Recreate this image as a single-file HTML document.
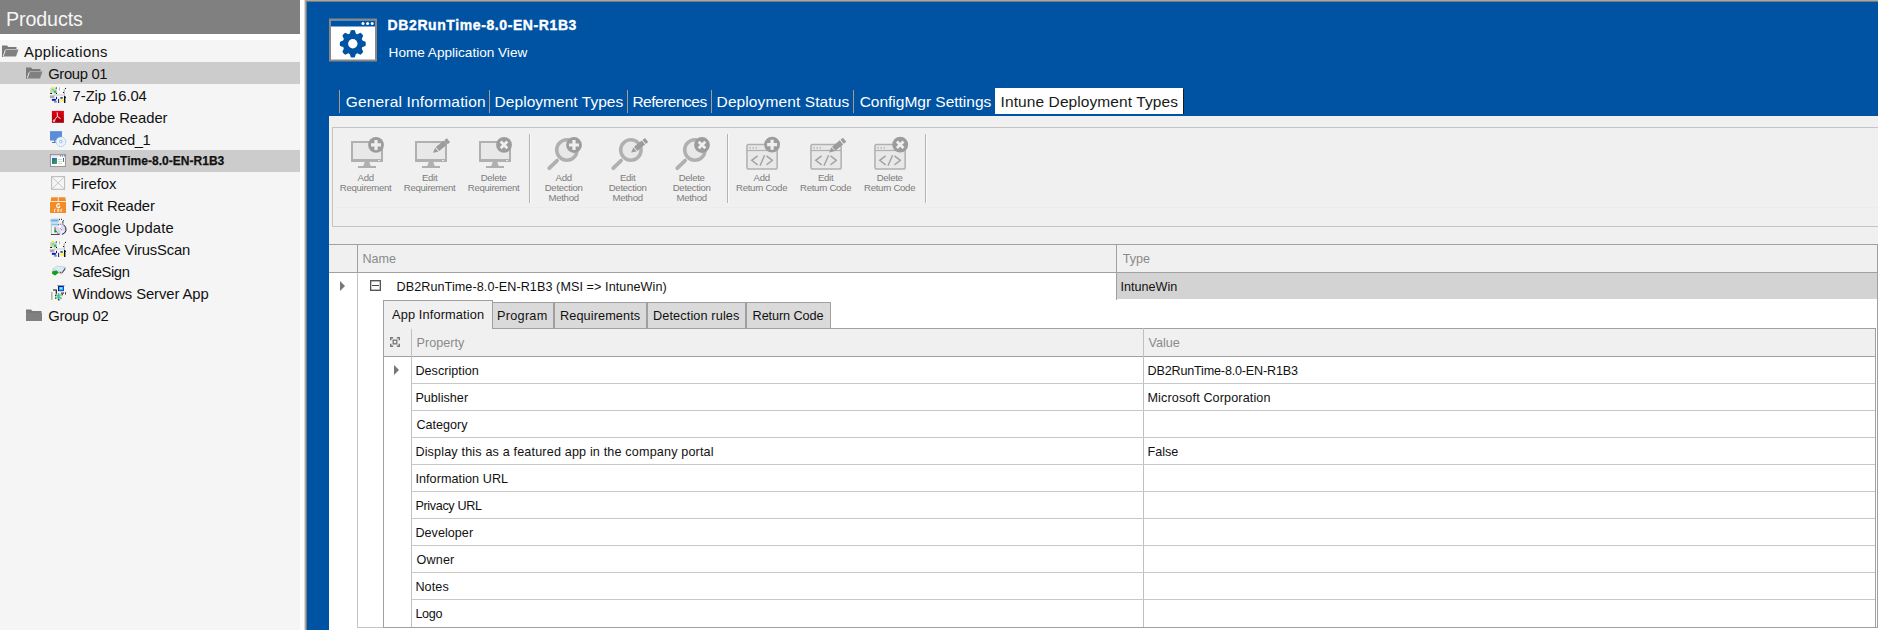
<!DOCTYPE html>
<html><head><meta charset="utf-8"><style>
html,body{margin:0;padding:0;}
body{width:1878px;height:635px;overflow:hidden;position:relative;background:#fff;font-family:"Liberation Sans", sans-serif;}
.r{position:absolute;}
.t{position:absolute;white-space:nowrap;line-height:1;}
.c{text-align:center;}
svg{display:block;}
</style></head><body>
<div class="r" style="left:0px;top:0px;width:300px;height:34px;background:#808080;"></div>
<div class="t" style="left:6.00px;top:10px;font-size:19.7px;color:#f6f6f6;letter-spacing:-0.121px;">Products</div>
<div class="r" style="left:0px;top:40px;width:300px;height:590px;background:#f5f5f5;"></div>
<div class="r" style="left:0px;top:62px;width:300px;height:22px;background:#cccccc;"></div>
<div class="r" style="left:0px;top:150px;width:300px;height:22px;background:#cccccc;"></div>
<div class="r" style="left:1px;top:44px"><svg width="18" height="14" viewBox="0 0 18 14"><path d="M1 1.5h5l1.5 1.5h8v2H4.5L2 13H1z" fill="#7a7a7a"/><path d="M4 5.5h13.5L15 12.5H1.5z" fill="#808080"/><path d="M2.2 12.2L4.3 6.2" stroke="#fff" stroke-width="0.8"/></svg></div>
<div class="t" style="left:24.00px;top:45px;font-size:14.8px;color:#111;letter-spacing:0.328px;">Applications</div>
<div class="r" style="left:25px;top:66px"><svg width="18" height="14" viewBox="0 0 18 14"><path d="M1 1.5h5l1.5 1.5h8v2H4.5L2 13H1z" fill="#7a7a7a"/><path d="M4 5.5h13.5L15 12.5H1.5z" fill="#808080"/><path d="M2.2 12.2L4.3 6.2" stroke="#fff" stroke-width="0.8"/></svg></div>
<div class="t" style="left:48.20px;top:67px;font-size:14.8px;color:#111;letter-spacing:-0.338px;">Group 01</div>
<div class="r" style="left:25px;top:308px"><svg width="18" height="14" viewBox="0 0 18 14"><path d="M1 1.5h5l1.5 1.5h9v10H1z" fill="#7a7a7a"/><path d="M1 5h16v8H1z" fill="#808080"/></svg></div>
<div class="t" style="left:48.20px;top:309px;font-size:14.8px;color:#111;letter-spacing:-0.166px;">Group 02</div>
<div class="r" style="left:48px;top:84px"><svg width="20" height="22" viewBox="0 0 20 22"><rect x="2.2" y="3.9" width="6.9" height="5.7" fill="#d8d0d8" /><rect x="3.8" y="2.9" width="2.2" height="1.9" fill="#ffee00" /><rect x="3.8" y="5.1" width="2.2" height="1.6" fill="#22e8f0" /><rect x="2.8" y="6.7" width="1.3" height="1.6" fill="#f0e000" /><circle cx="7.1" cy="7.8" r="1.2" fill="#10d020"/><rect x="7.8" y="3.4" width="1.0" height="1.2" fill="#111" /><rect x="2.2" y="9" width="1.8" height="1" fill="#111" /><rect x="8" y="8.9" width="1" height="1.1" fill="#111" /><rect x="9.1" y="2.9" width="8.5" height="9.5" fill="#fafafa" /><rect x="11" y="3.3" width="1" height="3.1" fill="#b8b8b8" /><rect x="15.7" y="5.1" width="1.1" height="7.3" fill="#b0b0b0" /><rect x="17" y="3.9" width="1" height="1.1" fill="#111" /><rect x="15" y="8" width="1" height="1" fill="#111" /><rect x="6" y="10.5" width="9" height="1.0" fill="#c8c8c8" /><rect x="1.9" y="11.4" width="4.4" height="2.8" fill="#a8a8a8" /><rect x="3.9" y="14.9" width="4.0" height="1.9" fill="#0010e0" /><rect x="8" y="12.9" width="1" height="2.3" fill="#0010a0" /><rect x="6" y="16.8" width="2.8" height="1.9" fill="#909090" /><rect x="10.1" y="14.9" width="1.1" height="4.1" fill="#0010c0" /><rect x="11.2" y="14.9" width="4.8" height="3.1" fill="#f8f040" /><rect x="12.3" y="13.3" width="2.5" height="1.3" fill="#0010a0" /><path d="M11.5 15.5h1.2M13.8 15.5h1.2M12.6 16.7h1.2M11.5 17.6h1.2M13.8 17.6h1.2" stroke="#fff" stroke-width="0.7"/><rect x="16" y="12" width="1.4" height="7" fill="#111" /><rect x="17" y="13" width="1" height="1" fill="#0010a0" /></svg></div>
<div class="t" style="left:72.60px;top:89px;font-size:14.8px;color:#111;letter-spacing:-0.062px;">7-Zip 16.04</div>
<div class="r" style="left:48px;top:106px"><svg width="20" height="22" viewBox="0 0 20 22"><defs><linearGradient id="ag" x1="0" y1="0" x2="0" y2="1"><stop offset="0" stop-color="#e80010"/><stop offset="1" stop-color="#a00008"/></linearGradient></defs><rect x="3.9" y="4.9" width="12.0" height="11.9" fill="url(#ag)" /><path d="M9.2 6.3L9.4 10.4L12.6 12.6M9.4 10.4L7.6 12.4L6.1 14.9" stroke="#fff" stroke-width="0.9" fill="none"/><circle cx="6" cy="14.8" r="0.9" fill="none" stroke="#fff" stroke-width="0.7"/></svg></div>
<div class="t" style="left:72.60px;top:111px;font-size:14.8px;color:#111;letter-spacing:-0.046px;">Adobe Reader</div>
<div class="r" style="left:48px;top:128px"><svg width="20" height="22" viewBox="0 0 20 22"><rect x="2" y="3" width="12" height="9" fill="#5a8cd8" /><rect x="2" y="3" width="12" height="1" fill="#6a9ae0" /><rect x="2" y="12" width="5.5" height="0.8" fill="#a0a8b8" /><rect x="6" y="12" width="1.5" height="2.5" fill="#5a8cd8" /><rect x="4" y="14" width="3.5" height="1" fill="#4a7cc8" /><circle cx="12.9" cy="13.7" r="4.8" fill="#eef4fc" stroke="#8ab0e8" stroke-width="0.9" stroke-dasharray="1.2 0.8"/><circle cx="12.9" cy="13.5" r="1.4" fill="none" stroke="#8ab0e8" stroke-width="0.8"/></svg></div>
<div class="t" style="left:72.60px;top:133px;font-size:14.8px;color:#111;letter-spacing:-0.449px;">Advanced_1</div>
<div class="r" style="left:48px;top:150px"><svg width="20" height="22" viewBox="0 0 20 22"><defs><linearGradient id="dg" x1="0" y1="0" x2="1" y2="1"><stop offset="0" stop-color="#2a58b8"/><stop offset="1" stop-color="#38b040"/></linearGradient><linearGradient id="dg2" x1="0" y1="0" x2="0" y2="1"><stop offset="0" stop-color="#2a58b8"/><stop offset="1" stop-color="#38b040"/></linearGradient></defs><rect x="2.4" y="4.4" width="15.0" height="12.0" fill="#fff" stroke="#8c8c8c" stroke-width="0.9"/><rect x="3" y="5" width="13.9" height="1.6" fill="#d8dcea" /><rect x="12" y="5.2" width="0.9" height="1.2" fill="#5a6a98" /><rect x="14" y="5.2" width="0.9" height="1.2" fill="#5a6a98" /><rect x="16" y="5.2" width="0.8" height="1.2" fill="#5a6a98" /><rect x="4" y="7.9" width="5" height="6.1" fill="url(#dg)" /><path d="M10 9.5h4M10 11.5h4M10 13.5h4" stroke="#c8c8c8" stroke-width="0.8"/><rect x="15" y="8" width="1" height="4" fill="url(#dg2)" /></svg></div>
<div class="t" style="left:72.60px;top:155px;font-size:12px;color:#111;font-weight:bold;letter-spacing:0.025px;-webkit-text-stroke:0.25px #111;">DB2RunTime-8.0-EN-R1B3</div>
<div class="r" style="left:48px;top:172px"><svg width="20" height="22" viewBox="0 0 20 22"><rect x="3.6" y="4.6" width="13" height="12.7" fill="none" stroke="#bababa" stroke-width="1"/><path d="M3.6 4.6L16.6 17.3M16.6 4.6L3.6 17.3" stroke="#bdbdbd" stroke-width="0.8"/></svg></div>
<div class="t" style="left:71.60px;top:177px;font-size:14.8px;color:#111;letter-spacing:-0.087px;">Firefox</div>
<div class="r" style="left:48px;top:194px"><svg width="20" height="22" viewBox="0 0 20 22"><path d="M2.6 7L3.4 3.2H17.2L18 7z" fill="#f28a26"/><rect x="9.7" y="3.2" width="1.2" height="3.8" fill="#fad8b8" /><rect x="2" y="7" width="16" height="1" fill="#fbe6d2" /><rect x="2" y="8" width="16" height="11" fill="#f28c28" /><path d="M12 10.3Q10.2 9.4 9 10.6Q8 12.2 9.2 13.4Q10.6 14.2 11.6 13.2V12.2H10.4" stroke="#fff" stroke-width="1.1" fill="none"/><path d="M6.5 18V15.6Q7 15 7.8 15.2M9.2 16.4Q9.4 15 10.5 15.2Q11.4 15.6 11 16.8Q10 18 9.2 16.9M13 18V15.6Q13.4 15 14.2 15.2" stroke="#fff" stroke-width="0.9" fill="none"/></svg></div>
<div class="t" style="left:71.60px;top:199px;font-size:14.8px;color:#111;letter-spacing:-0.134px;">Foxit Reader</div>
<div class="r" style="left:48px;top:216px"><svg width="20" height="22" viewBox="0 0 20 22"><rect x="2.8" y="7" width="8.2" height="11.5" fill="#f0f6fc" /><rect x="2.8" y="7" width="1.0" height="11.5" fill="#c0c0c0" /><rect x="2.4" y="3" width="8.6" height="3.2" fill="#9cd4f8" rx="1.5" stroke="#b8b8b8" stroke-width="0.6"/><rect x="3.6" y="4" width="6.0" height="1" fill="#50b0f8" /><rect x="3.6" y="7.6" width="7.4" height="1.8" fill="#7cc4f8" /><rect x="6.3" y="10.8" width="1.7" height="1.7" fill="#f88820" /><rect x="6.3" y="12.5" width="2.2" height="4.0" fill="#18a830" /><circle cx="13" cy="13.2" r="5.2" fill="#dcd6f8"/><path d="M9.5 10.5Q11 8.6 13.5 8.6L12.6 12.2z" fill="#ffffff"/><path d="M16.5 15.5Q15 17.6 12.5 17.8L13.4 14.2z" fill="#f4f0ff"/><path d="M10 9.2Q12 7.6 14.6 8.2" stroke="#111" stroke-width="0.7" fill="none" stroke-dasharray="1 1"/><path d="M15.4 8.6Q18.6 10.8 18 14.6Q17.2 17.6 14 18.4" stroke="#111" stroke-width="0.9" fill="none"/><path d="M8 15Q9 17.6 12 18.4" stroke="#111" stroke-width="0.8" fill="none" stroke-dasharray="1.2 0.8"/><circle cx="13" cy="13.2" r="1.3" fill="#fff"/><path d="M12.3 12.7l1.5 1.1" stroke="#333" stroke-width="0.8"/><rect x="11" y="2.8" width="1" height="1.0" fill="#111" /><rect x="13" y="2.8" width="1" height="1.0" fill="#111" /><path d="M15.6 4.2Q14.3 5.2 15 7.5" stroke="#111" stroke-width="0.9" fill="none"/><rect x="3" y="18" width="8" height="0.8" fill="#222" /></svg></div>
<div class="t" style="left:72.60px;top:221px;font-size:14.8px;color:#111;letter-spacing:0.124px;">Google Update</div>
<div class="r" style="left:48px;top:238px"><svg width="20" height="22" viewBox="0 0 20 22"><rect x="2.2" y="3.9" width="6.9" height="5.7" fill="#d8d0d8" /><rect x="3.8" y="2.9" width="2.2" height="1.9" fill="#ffee00" /><rect x="3.8" y="5.1" width="2.2" height="1.6" fill="#22e8f0" /><rect x="2.8" y="6.7" width="1.3" height="1.6" fill="#f0e000" /><circle cx="7.1" cy="7.8" r="1.2" fill="#10d020"/><rect x="7.8" y="3.4" width="1.0" height="1.2" fill="#111" /><rect x="2.2" y="9" width="1.8" height="1" fill="#111" /><rect x="8" y="8.9" width="1" height="1.1" fill="#111" /><rect x="9.1" y="2.9" width="8.5" height="9.5" fill="#fafafa" /><rect x="11" y="3.3" width="1" height="3.1" fill="#b8b8b8" /><rect x="15.7" y="5.1" width="1.1" height="7.3" fill="#b0b0b0" /><rect x="17" y="3.9" width="1" height="1.1" fill="#111" /><rect x="15" y="8" width="1" height="1" fill="#111" /><rect x="6" y="10.5" width="9" height="1.0" fill="#c8c8c8" /><rect x="1.9" y="11.4" width="4.4" height="2.8" fill="#a8a8a8" /><rect x="3.9" y="14.9" width="4.0" height="1.9" fill="#0010e0" /><rect x="8" y="12.9" width="1" height="2.3" fill="#0010a0" /><rect x="6" y="16.8" width="2.8" height="1.9" fill="#909090" /><rect x="10.1" y="14.9" width="1.1" height="4.1" fill="#0010c0" /><rect x="11.2" y="14.9" width="4.8" height="3.1" fill="#f8f040" /><rect x="12.3" y="13.3" width="2.5" height="1.3" fill="#0010a0" /><path d="M11.5 15.5h1.2M13.8 15.5h1.2M12.6 16.7h1.2M11.5 17.6h1.2M13.8 17.6h1.2" stroke="#fff" stroke-width="0.7"/><rect x="16" y="12" width="1.4" height="7" fill="#111" /><rect x="17" y="13" width="1" height="1" fill="#0010a0" /></svg></div>
<div class="t" style="left:71.60px;top:243px;font-size:14.8px;color:#111;letter-spacing:-0.188px;">McAfee VirusScan</div>
<div class="r" style="left:48px;top:260px"><svg width="20" height="22" viewBox="0 0 20 22"><path d="M4.5 9.2L9 6L17.5 7.2L13.8 12.4z" fill="#d6ecf6" stroke="#a8b8c0" stroke-width="0.5"/><path d="M17.5 7.2L13.8 12.4L13.4 14.6L17.2 9.4z" fill="#3a4048"/><path d="M4.5 9.2L13.8 12.4L13.4 14.6L4.2 11.2z" fill="#c8d8e0"/><path d="M4 11.6L8.4 10.6L10.8 12.6L7.2 15.6L4.2 14z" fill="#10a018"/><circle cx="12.5" cy="12.5" r="0.8" fill="#e02020"/></svg></div>
<div class="t" style="left:72.60px;top:265px;font-size:14.8px;color:#111;letter-spacing:-0.389px;">SafeSign</div>
<div class="r" style="left:48px;top:282px"><svg width="20" height="22" viewBox="0 0 20 22"><rect x="9" y="3" width="7.7" height="0.9" fill="#a0a0a0" /><rect x="10" y="3.9" width="5.8" height="5.5" fill="#0a14a0" /><rect x="11" y="5" width="4" height="3.5" fill="#10c0f0" /><rect x="12" y="5.5" width="2" height="1.5" fill="#a0e8ff" /><rect x="9.5" y="9.4" width="6.5" height="1.2" fill="#f0f0f0" /><rect x="3" y="10" width="1.5" height="7.8" fill="#b0b0b0" /><path d="M5 8H8.3V12.5" stroke="#111" stroke-width="1.1" fill="none"/><circle cx="10.6" cy="14.6" r="3.4" fill="#e8e0a0"/><path d="M7.6 12.4l6 4.4M10.6 11.2v6.8" stroke="#30b0e0" stroke-width="1.2"/><path d="M8 16.5l5-4" stroke="#50d080" stroke-width="1.1"/><rect x="13" y="10.6" width="3" height="1.0" fill="#111" /><rect x="17.2" y="10.2" width="0.8" height="2.4" fill="#111" /><rect x="13.7" y="12" width="1.0" height="1.4" fill="#111" /><rect x="7" y="13.2" width="1" height="1.0" fill="#111" /><rect x="10" y="17.4" width="1.5" height="1.0" fill="#111" /><rect x="7" y="15.6" width="1" height="1.0" fill="#111" /></svg></div>
<div class="t" style="left:72.60px;top:287px;font-size:14.8px;color:#111;letter-spacing:-0.072px;">Windows Server App</div>
<div class="r" style="left:300px;top:0px;width:4px;height:635px;background:#ffffff;"></div>
<div class="r" style="left:304px;top:0px;width:1px;height:630px;background:#d8d8d8;"></div>
<div class="r" style="left:305px;top:0px;width:1px;height:630px;background:#a8a8a8;"></div>
<div class="r" style="left:306px;top:1px;width:1px;height:629px;background:#7a7a7a;"></div>
<div class="r" style="left:306px;top:0px;width:1572px;height:1px;background:#a8a8a8;"></div>
<div class="r" style="left:307px;top:1px;width:1571px;height:1px;background:#7a7a7a;"></div>
<div class="r" style="left:307px;top:2px;width:1571px;height:628px;background:#0053a3;"></div>
<div class="r" style="left:328px;top:17px;width:50px;height:46px">
<svg width="50" height="46" viewBox="0 0 50 46">
<rect x="2" y="2.5" width="46" height="41" fill="#fff" stroke="#8a8886" stroke-width="2"/>
<rect x="3" y="3.5" width="44" height="6" fill="#0053a3"/>
<circle cx="35" cy="6.5" r="1.5" fill="#fff"/><circle cx="39.6" cy="6.5" r="1.5" fill="#fff"/><circle cx="44.2" cy="6.5" r="1.5" fill="#fff"/>
<g transform="translate(24.8,26.8) scale(1,1.06)" fill="#0053a3">
<circle r="10"/><path d="M-3.3 -9 L-2 -12.7 Q0 -13.3 2 -12.7 L3.3 -9 Z" transform="rotate(0)"/><path d="M-3.3 -9 L-2 -12.7 Q0 -13.3 2 -12.7 L3.3 -9 Z" transform="rotate(45)"/><path d="M-3.3 -9 L-2 -12.7 Q0 -13.3 2 -12.7 L3.3 -9 Z" transform="rotate(90)"/><path d="M-3.3 -9 L-2 -12.7 Q0 -13.3 2 -12.7 L3.3 -9 Z" transform="rotate(135)"/><path d="M-3.3 -9 L-2 -12.7 Q0 -13.3 2 -12.7 L3.3 -9 Z" transform="rotate(180)"/><path d="M-3.3 -9 L-2 -12.7 Q0 -13.3 2 -12.7 L3.3 -9 Z" transform="rotate(225)"/><path d="M-3.3 -9 L-2 -12.7 Q0 -13.3 2 -12.7 L3.3 -9 Z" transform="rotate(270)"/><path d="M-3.3 -9 L-2 -12.7 Q0 -13.3 2 -12.7 L3.3 -9 Z" transform="rotate(315)"/>
<circle r="4.7" fill="#fff" transform="scale(1,0.943)"/>
</g>
</svg></div>
<div class="t" style="left:387.60px;top:18px;font-size:14px;color:#fff;font-weight:bold;letter-spacing:0.593px;-webkit-text-stroke:0.35px #fff;">DB2RunTime-8.0-EN-R1B3</div>
<div class="t" style="left:388.60px;top:46px;font-size:13.6px;color:#fff;letter-spacing:-0.006px;">Home Application View</div>
<div class="r" style="left:339px;top:90px;width:1px;height:23px;background:#a89a8c;"></div>
<div class="t" style="left:345.80px;top:94px;font-size:15.5px;color:#fff;letter-spacing:0.157px;">General Information</div>
<div class="r" style="left:489px;top:90px;width:1px;height:23px;background:#a89a8c;"></div>
<div class="t" style="left:494.60px;top:94px;font-size:15.5px;color:#fff;letter-spacing:0.039px;">Deployment Types</div>
<div class="r" style="left:627px;top:90px;width:1px;height:23px;background:#a89a8c;"></div>
<div class="t" style="left:632.40px;top:94px;font-size:15.5px;color:#fff;letter-spacing:-0.490px;">References</div>
<div class="r" style="left:711px;top:90px;width:1px;height:23px;background:#a89a8c;"></div>
<div class="t" style="left:716.60px;top:94px;font-size:15.5px;color:#fff;letter-spacing:0.100px;">Deployment Status</div>
<div class="r" style="left:853px;top:90px;width:1px;height:23px;background:#a89a8c;"></div>
<div class="t" style="left:859.70px;top:94px;font-size:15.5px;color:#fff;letter-spacing:-0.015px;">ConfigMgr Settings</div>
<div class="r" style="left:995px;top:88px;width:188px;height:26px;background:#fff;"></div>
<div class="r" style="left:1183px;top:89px;width:1px;height:25px;background:#1a1a1a;"></div>
<div class="t" style="left:1000.60px;top:94px;font-size:15.5px;color:#1a1a1a;letter-spacing:0.086px;">Intune Deployment Types</div>
<div class="r" style="left:329px;top:116px;width:1549px;height:514px;background:#f0f0f0;"></div>
<div class="r" style="left:332px;top:127px;width:1546px;height:100px;background:transparent;border-left:1px solid #c4c4c4;border-top:1px solid #c4c4c4;border-bottom:1px solid #c4c4c4;box-sizing:border-box;"></div>
<div class="r" style="left:333px;top:207px;width:1545px;height:1px;background:#ececec;"></div>
<div class="r" style="left:529px;top:134px;width:1px;height:69px;background:#b4b4b4;"></div>
<div class="r" style="left:530px;top:134px;width:1px;height:69px;background:#fafafa;"></div>
<div class="r" style="left:727px;top:134px;width:1px;height:69px;background:#b4b4b4;"></div>
<div class="r" style="left:728px;top:134px;width:1px;height:69px;background:#fafafa;"></div>
<div class="r" style="left:925px;top:134px;width:1px;height:69px;background:#b4b4b4;"></div>
<div class="r" style="left:926px;top:134px;width:1px;height:69px;background:#fafafa;"></div>
<div class="t c" style="left:325.65px;width:80px;top:173px;font-size:9.6px;letter-spacing:-0.3px;color:#7c7c7c">Add</div>
<div class="t c" style="left:325.65px;width:80px;top:183px;font-size:9.6px;letter-spacing:-0.3px;color:#7c7c7c">Requirement</div>
<div class="t c" style="left:389.65px;width:80px;top:173px;font-size:9.6px;letter-spacing:-0.3px;color:#7c7c7c">Edit</div>
<div class="t c" style="left:389.65px;width:80px;top:183px;font-size:9.6px;letter-spacing:-0.3px;color:#7c7c7c">Requirement</div>
<div class="t c" style="left:453.65px;width:80px;top:173px;font-size:9.6px;letter-spacing:-0.3px;color:#7c7c7c">Delete</div>
<div class="t c" style="left:453.65px;width:80px;top:183px;font-size:9.6px;letter-spacing:-0.3px;color:#7c7c7c">Requirement</div>
<div class="t c" style="left:523.65px;width:80px;top:173px;font-size:9.6px;letter-spacing:-0.3px;color:#7c7c7c">Add</div>
<div class="t c" style="left:523.65px;width:80px;top:183px;font-size:9.6px;letter-spacing:-0.3px;color:#7c7c7c">Detection</div>
<div class="t c" style="left:523.65px;width:80px;top:193px;font-size:9.6px;letter-spacing:-0.3px;color:#7c7c7c">Method</div>
<div class="t c" style="left:587.65px;width:80px;top:173px;font-size:9.6px;letter-spacing:-0.3px;color:#7c7c7c">Edit</div>
<div class="t c" style="left:587.65px;width:80px;top:183px;font-size:9.6px;letter-spacing:-0.3px;color:#7c7c7c">Detection</div>
<div class="t c" style="left:587.65px;width:80px;top:193px;font-size:9.6px;letter-spacing:-0.3px;color:#7c7c7c">Method</div>
<div class="t c" style="left:651.65px;width:80px;top:173px;font-size:9.6px;letter-spacing:-0.3px;color:#7c7c7c">Delete</div>
<div class="t c" style="left:651.65px;width:80px;top:183px;font-size:9.6px;letter-spacing:-0.3px;color:#7c7c7c">Detection</div>
<div class="t c" style="left:651.65px;width:80px;top:193px;font-size:9.6px;letter-spacing:-0.3px;color:#7c7c7c">Method</div>
<div class="t c" style="left:721.65px;width:80px;top:173px;font-size:9.6px;letter-spacing:-0.3px;color:#7c7c7c">Add</div>
<div class="t c" style="left:721.65px;width:80px;top:183px;font-size:9.6px;letter-spacing:-0.3px;color:#7c7c7c">Return Code</div>
<div class="t c" style="left:785.65px;width:80px;top:173px;font-size:9.6px;letter-spacing:-0.3px;color:#7c7c7c">Edit</div>
<div class="t c" style="left:785.65px;width:80px;top:183px;font-size:9.6px;letter-spacing:-0.3px;color:#7c7c7c">Return Code</div>
<div class="t c" style="left:849.65px;width:80px;top:173px;font-size:9.6px;letter-spacing:-0.3px;color:#7c7c7c">Delete</div>
<div class="t c" style="left:849.65px;width:80px;top:183px;font-size:9.6px;letter-spacing:-0.3px;color:#7c7c7c">Return Code</div>
<svg class="r" style="left:0;top:0" width="1000" height="240" viewBox="0 0 1000 240"><rect x="351.0" y="141" width="32" height="21" fill="#b0b0b0"/><rect x="353.0" y="143" width="28" height="16" fill="#e8e8e8"/><rect x="378.0" y="160" width="2" height="1" fill="#e8e8e8"/><path d="M364.5 162h5l0.5 2.5q0.5 1.5 2 1.5h-10q1.5 0 2-1.5z" fill="#b0b0b0"/><rect x="358.0" y="166" width="18" height="2" fill="#b0b0b0"/><circle cx="376" cy="144.9" r="7.9" fill="#9c9c9c"/><path d="M371 144.9h10M376 139.9v10" stroke="#efefef" stroke-width="3.2"/><rect x="415.0" y="141" width="32" height="21" fill="#b0b0b0"/><rect x="417.0" y="143" width="28" height="16" fill="#e8e8e8"/><rect x="442.0" y="160" width="2" height="1" fill="#e8e8e8"/><path d="M428.5 162h5l0.5 2.5q0.5 1.5 2 1.5h-10q1.5 0 2-1.5z" fill="#b0b0b0"/><rect x="422.0" y="166" width="18" height="2" fill="#b0b0b0"/><g transform="translate(432.9,152.8) rotate(-39)"><path d="M0 0 L5 -2.6 L5 2.6 Z" fill="#9c9c9c"/><rect x="5.9" y="-2.6" width="10" height="5.2" fill="#9c9c9c"/><rect x="16.8" y="-2.6" width="3.2" height="5.2" fill="#9c9c9c"/></g><rect x="479.0" y="141" width="32" height="21" fill="#b0b0b0"/><rect x="481.0" y="143" width="28" height="16" fill="#e8e8e8"/><rect x="506.0" y="160" width="2" height="1" fill="#e8e8e8"/><path d="M492.5 162h5l0.5 2.5q0.5 1.5 2 1.5h-10q1.5 0 2-1.5z" fill="#b0b0b0"/><rect x="486.0" y="166" width="18" height="2" fill="#b0b0b0"/><circle cx="504" cy="144.9" r="7.9" fill="#9c9c9c"/><path d="M500.7 141.6l6.6 6.6M507.3 141.6l-6.6 6.6" stroke="#efefef" stroke-width="2.8"/><circle cx="566.9" cy="150" r="10.2" fill="#e8e8e8" stroke="#b0b0b0" stroke-width="3.5"/><path d="M557.1 160.6L549.3 168.2" stroke="#b0b0b0" stroke-width="3.8" stroke-linecap="round"/><circle cx="574" cy="145" r="7.9" fill="#9c9c9c"/><path d="M569 145h10M574 140v10" stroke="#efefef" stroke-width="3.2"/><circle cx="630.9" cy="150" r="10.2" fill="#e8e8e8" stroke="#b0b0b0" stroke-width="3.5"/><path d="M621.1 160.6L613.3 168.2" stroke="#b0b0b0" stroke-width="3.8" stroke-linecap="round"/><g transform="translate(631.1,152.6) rotate(-39)"><path d="M0 0 L5 -2.6 L5 2.6 Z" fill="#9c9c9c"/><rect x="5.9" y="-2.6" width="10" height="5.2" fill="#9c9c9c"/><rect x="16.8" y="-2.6" width="3.2" height="5.2" fill="#9c9c9c"/></g><circle cx="694.9" cy="150" r="10.2" fill="#e8e8e8" stroke="#b0b0b0" stroke-width="3.5"/><path d="M685.1 160.6L677.3 168.2" stroke="#b0b0b0" stroke-width="3.8" stroke-linecap="round"/><circle cx="702" cy="145" r="7.9" fill="#9c9c9c"/><path d="M698.7 141.7l6.6 6.6M705.3 141.7l-6.6 6.6" stroke="#efefef" stroke-width="2.8"/><rect x="746.95" y="144.6" width="30.2" height="24.4" rx="1.8" fill="#e8e8e8" stroke="#b0b0b0" stroke-width="1.5"/><path d="M747.2 150.5h30" stroke="#b0b0b0" stroke-width="1.2"/><path d="M749.2 147.8h1.6M752.4000000000001 147.8h1.6M755.5 147.8h1.6" stroke="#b0b0b0" stroke-width="1.2"/><path d="M757.6 155.8l-5.8 4.5 5.8 4.5M766.5 155.8l5.8 4.5-5.8 4.5M764.6 155.2l-4.6 10.6" stroke="#a4a4a4" stroke-width="1.5" fill="none"/><circle cx="772.1" cy="144.7" r="7.9" fill="#9c9c9c"/><path d="M767.1 144.7h10M772.1 139.7v10" stroke="#efefef" stroke-width="3.2"/><rect x="810.95" y="144.6" width="30.2" height="24.4" rx="1.8" fill="#e8e8e8" stroke="#b0b0b0" stroke-width="1.5"/><path d="M811.2 150.5h30" stroke="#b0b0b0" stroke-width="1.2"/><path d="M813.2 147.8h1.6M816.4000000000001 147.8h1.6M819.5 147.8h1.6" stroke="#b0b0b0" stroke-width="1.2"/><path d="M821.6 155.8l-5.8 4.5 5.8 4.5M830.5 155.8l5.8 4.5-5.8 4.5M828.6 155.2l-4.6 10.6" stroke="#a4a4a4" stroke-width="1.5" fill="none"/><g transform="translate(829.1,152.4) rotate(-39)"><path d="M0 0 L5 -2.6 L5 2.6 Z" fill="#9c9c9c"/><rect x="5.9" y="-2.6" width="10" height="5.2" fill="#9c9c9c"/><rect x="16.8" y="-2.6" width="3.2" height="5.2" fill="#9c9c9c"/></g><rect x="874.95" y="144.6" width="30.2" height="24.4" rx="1.8" fill="#e8e8e8" stroke="#b0b0b0" stroke-width="1.5"/><path d="M875.2 150.5h30" stroke="#b0b0b0" stroke-width="1.2"/><path d="M877.2 147.8h1.6M880.4000000000001 147.8h1.6M883.5 147.8h1.6" stroke="#b0b0b0" stroke-width="1.2"/><path d="M885.6 155.8l-5.8 4.5 5.8 4.5M894.5 155.8l5.8 4.5-5.8 4.5M892.6 155.2l-4.6 10.6" stroke="#a4a4a4" stroke-width="1.5" fill="none"/><circle cx="900.2" cy="144.7" r="7.9" fill="#9c9c9c"/><path d="M896.9000000000001 141.39999999999998l6.6 6.6M903.5 141.39999999999998l-6.6 6.6" stroke="#efefef" stroke-width="2.8"/></svg>
<div class="r" style="left:329px;top:244px;width:1549px;height:386px;background:#ffffff;"></div>
<div class="r" style="left:329px;top:244px;width:1549px;height:29px;background:#f0f0f0;"></div>
<div class="r" style="left:329px;top:244px;width:1549px;height:1px;background:#a0a0a0;"></div>
<div class="r" style="left:329px;top:272px;width:1549px;height:1px;background:#a0a0a0;"></div>
<div class="r" style="left:357px;top:244px;width:1px;height:29px;background:#a0a0a0;"></div>
<div class="r" style="left:357px;top:273px;width:1px;height:355px;background:#c4c4c4;"></div>
<div class="r" style="left:1116px;top:244px;width:1px;height:56px;background:#a0a0a0;"></div>
<div class="r" style="left:1877px;top:244px;width:1px;height:384px;background:#a0a0a0;"></div>
<div class="t" style="left:362.50px;top:253px;font-size:12.6px;color:#8a8a8a;">Name</div>
<div class="t" style="left:1122.80px;top:253px;font-size:12.6px;color:#8a8a8a;">Type</div>
<div class="r" style="left:340px;top:281px;width:0;height:0;border-top:5px solid transparent;border-bottom:5px solid transparent;border-left:5px solid #777"></div>
<div class="r" style="left:370px;top:280px;width:11px;height:11px;background:transparent;border:1px solid #555;box-shadow:inset 0 0 0 0.4px #777;box-sizing:border-box;"></div>
<div class="r" style="left:372px;top:285px;width:7px;height:1px;background:#444;"></div>
<div class="t" style="left:396.50px;top:281px;font-size:12.6px;color:#111;letter-spacing:0.083px;">DB2RunTime-8.0-EN-R1B3 (MSI =&gt; IntuneWin)</div>
<div class="r" style="left:1117px;top:273px;width:760px;height:26px;background:#d3d3d3;"></div>
<div class="t" style="left:1120.50px;top:281px;font-size:12.6px;color:#111;">IntuneWin</div>
<div class="r" style="left:492px;top:302px;width:339px;height:27px;background:#dadada;"></div>
<div class="r" style="left:492px;top:302px;width:339px;height:1px;background:#a0a0a0;"></div>
<div class="r" style="left:553px;top:302px;width:2px;height:27px;background:#a0a0a0;"></div>
<div class="r" style="left:646px;top:302px;width:2px;height:27px;background:#a0a0a0;"></div>
<div class="r" style="left:745px;top:302px;width:2px;height:27px;background:#a0a0a0;"></div>
<div class="r" style="left:830px;top:302px;width:1px;height:27px;background:#a0a0a0;"></div>
<div class="r" style="left:383px;top:300px;width:110px;height:29px;background:#f0f0f0;border:1px solid #a0a0a0;border-bottom:none;box-sizing:border-box;"></div>
<div class="t" style="left:392.00px;top:309px;font-size:12.8px;color:#111;letter-spacing:0.127px;">App Information</div>
<div class="t" style="left:497.00px;top:310px;font-size:12.7px;color:#111;letter-spacing:0.270px;">Program</div>
<div class="t" style="left:560.00px;top:310px;font-size:12.7px;color:#111;letter-spacing:0.106px;">Requirements</div>
<div class="t" style="left:653.00px;top:310px;font-size:12.7px;color:#111;letter-spacing:0.123px;">Detection rules</div>
<div class="t" style="left:752.60px;top:310px;font-size:12.7px;color:#111;letter-spacing:-0.108px;">Return Code</div>
<div class="r" style="left:383px;top:329px;width:1493px;height:28px;background:#f0f0f0;"></div>
<div class="r" style="left:383px;top:300px;width:1px;height:328px;background:#a0a0a0;"></div>
<div class="r" style="left:492px;top:328px;width:1384px;height:1px;background:#a0a0a0;"></div>
<div class="r" style="left:383px;top:356px;width:1493px;height:1px;background:#a0a0a0;"></div>
<div class="r" style="left:1875px;top:328px;width:1px;height:300px;background:#a0a0a0;"></div>
<div class="r" style="left:411px;top:329px;width:1px;height:298px;background:#c0c0c0;"></div>
<div class="r" style="left:1143px;top:328px;width:1px;height:299px;background:#c0c0c0;"></div>
<div class="r" style="left:357px;top:627px;width:26px;height:1px;background:#c4c4c4;"></div>
<div class="r" style="left:383px;top:627px;width:1495px;height:1px;background:#a0a0a0;"></div>
<div class="r" style="left:390px;top:337px;width:10px;height:10px"><svg width="10" height="10" viewBox="0 0 10 10"><path d="M0.75 3.2V0.75H3.2M6.8 0.75h2.45V3.2M9.25 6.8v2.45H6.8M3.2 9.25H0.75V6.8" stroke="#7a7a7a" stroke-width="1.5" fill="none"/><rect x="3.2" y="3.2" width="3.6" height="3.6" fill="none" stroke="#7a7a7a" stroke-width="1.4"/></svg></div>
<div class="t" style="left:416.60px;top:337px;font-size:12.6px;color:#8a8a8a;">Property</div>
<div class="t" style="left:1148.50px;top:337px;font-size:12.6px;color:#8a8a8a;">Value</div>
<div class="r" style="left:394px;top:365px;width:0;height:0;border-top:5px solid transparent;border-bottom:5px solid transparent;border-left:5px solid #777"></div>
<div class="t" style="left:415.40px;top:365px;font-size:12.6px;color:#111;letter-spacing:0.041px;">Description</div>
<div class="t" style="left:1147.50px;top:365px;font-size:12.6px;color:#111;letter-spacing:-0.176px;">DB2RunTime-8.0-EN-R1B3</div>
<div class="r" style="left:411px;top:383px;width:1464px;height:1px;background:#c8c8c8;"></div>
<div class="t" style="left:415.40px;top:392px;font-size:12.6px;color:#111;letter-spacing:0.024px;">Publisher</div>
<div class="t" style="left:1147.50px;top:392px;font-size:12.6px;color:#111;letter-spacing:0.131px;">Microsoft Corporation</div>
<div class="r" style="left:411px;top:410px;width:1464px;height:1px;background:#c8c8c8;"></div>
<div class="t" style="left:416.40px;top:419px;font-size:12.6px;color:#111;">Category</div>
<div class="r" style="left:411px;top:437px;width:1464px;height:1px;background:#c8c8c8;"></div>
<div class="t" style="left:415.40px;top:446px;font-size:12.6px;color:#111;letter-spacing:0.164px;">Display this as a featured app in the company portal</div>
<div class="t" style="left:1147.50px;top:446px;font-size:12.6px;color:#111;">False</div>
<div class="r" style="left:411px;top:464px;width:1464px;height:1px;background:#c8c8c8;"></div>
<div class="t" style="left:415.40px;top:473px;font-size:12.6px;color:#111;letter-spacing:0.072px;">Information URL</div>
<div class="r" style="left:411px;top:491px;width:1464px;height:1px;background:#c8c8c8;"></div>
<div class="t" style="left:415.40px;top:500px;font-size:12.6px;color:#111;letter-spacing:-0.337px;">Privacy URL</div>
<div class="r" style="left:411px;top:518px;width:1464px;height:1px;background:#c8c8c8;"></div>
<div class="t" style="left:415.40px;top:527px;font-size:12.6px;color:#111;letter-spacing:0.036px;">Developer</div>
<div class="r" style="left:411px;top:545px;width:1464px;height:1px;background:#c8c8c8;"></div>
<div class="t" style="left:416.40px;top:554px;font-size:12.6px;color:#111;letter-spacing:0.200px;">Owner</div>
<div class="r" style="left:411px;top:572px;width:1464px;height:1px;background:#c8c8c8;"></div>
<div class="t" style="left:415.40px;top:581px;font-size:12.6px;color:#111;letter-spacing:0.100px;">Notes</div>
<div class="r" style="left:411px;top:599px;width:1464px;height:1px;background:#c8c8c8;"></div>
<div class="t" style="left:415.40px;top:608px;font-size:12.6px;color:#111;letter-spacing:-0.271px;">Logo</div>
</body></html>
